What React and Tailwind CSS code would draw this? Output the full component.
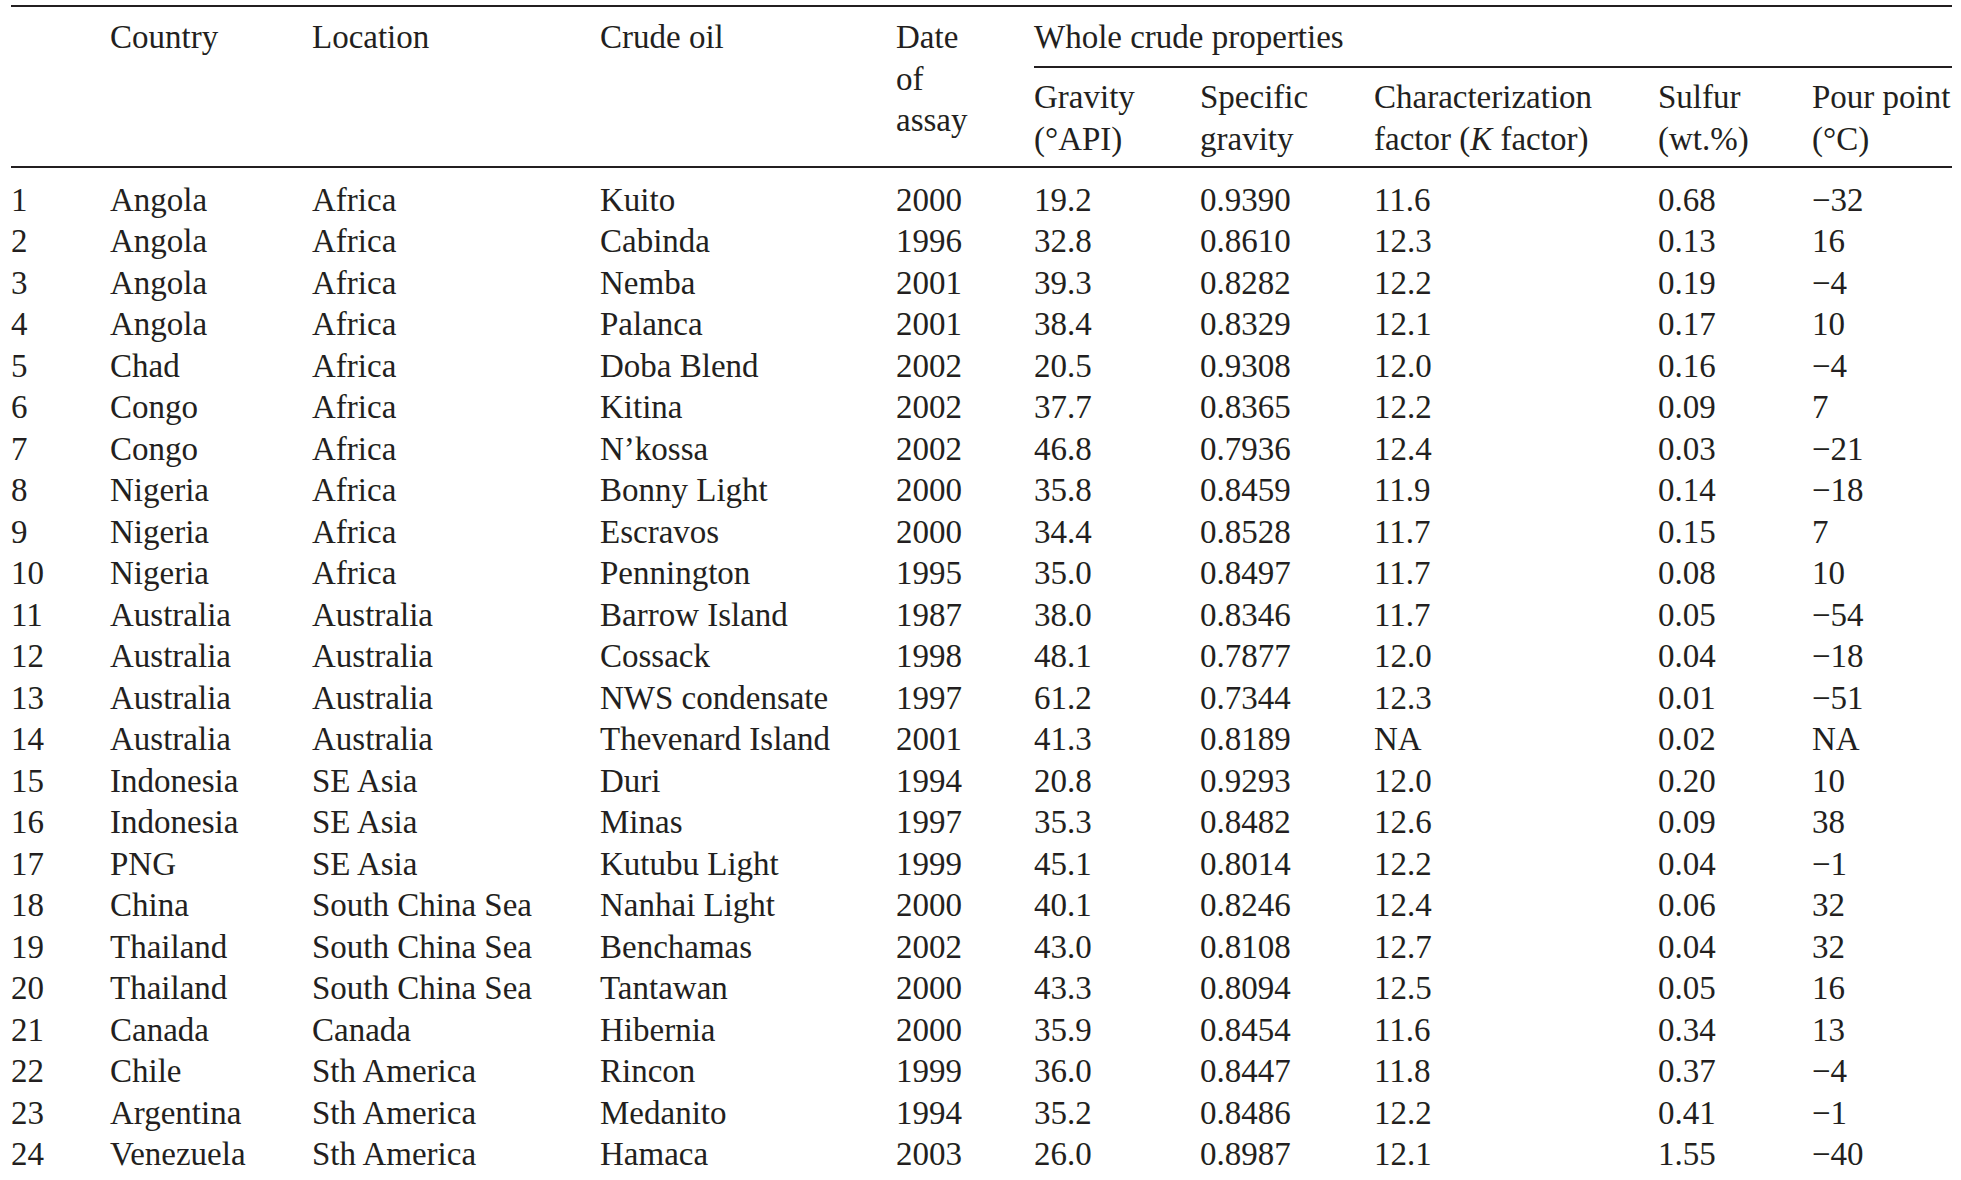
import React from "react";

const rows = [
  ["1", "Angola", "Africa", "Kuito", "2000", "19.2", "0.9390", "11.6", "0.68", "−32"],
  ["2", "Angola", "Africa", "Cabinda", "1996", "32.8", "0.8610", "12.3", "0.13", "16"],
  ["3", "Angola", "Africa", "Nemba", "2001", "39.3", "0.8282", "12.2", "0.19", "−4"],
  ["4", "Angola", "Africa", "Palanca", "2001", "38.4", "0.8329", "12.1", "0.17", "10"],
  ["5", "Chad", "Africa", "Doba Blend", "2002", "20.5", "0.9308", "12.0", "0.16", "−4"],
  ["6", "Congo", "Africa", "Kitina", "2002", "37.7", "0.8365", "12.2", "0.09", "7"],
  ["7", "Congo", "Africa", "N’kossa", "2002", "46.8", "0.7936", "12.4", "0.03", "−21"],
  ["8", "Nigeria", "Africa", "Bonny Light", "2000", "35.8", "0.8459", "11.9", "0.14", "−18"],
  ["9", "Nigeria", "Africa", "Escravos", "2000", "34.4", "0.8528", "11.7", "0.15", "7"],
  ["10", "Nigeria", "Africa", "Pennington", "1995", "35.0", "0.8497", "11.7", "0.08", "10"],
  ["11", "Australia", "Australia", "Barrow Island", "1987", "38.0", "0.8346", "11.7", "0.05", "−54"],
  ["12", "Australia", "Australia", "Cossack", "1998", "48.1", "0.7877", "12.0", "0.04", "−18"],
  ["13", "Australia", "Australia", "NWS condensate", "1997", "61.2", "0.7344", "12.3", "0.01", "−51"],
  ["14", "Australia", "Australia", "Thevenard Island", "2001", "41.3", "0.8189", "NA", "0.02", "NA"],
  ["15", "Indonesia", "SE Asia", "Duri", "1994", "20.8", "0.9293", "12.0", "0.20", "10"],
  ["16", "Indonesia", "SE Asia", "Minas", "1997", "35.3", "0.8482", "12.6", "0.09", "38"],
  ["17", "PNG", "SE Asia", "Kutubu Light", "1999", "45.1", "0.8014", "12.2", "0.04", "−1"],
  ["18", "China", "South China Sea", "Nanhai Light", "2000", "40.1", "0.8246", "12.4", "0.06", "32"],
  ["19", "Thailand", "South China Sea", "Benchamas", "2002", "43.0", "0.8108", "12.7", "0.04", "32"],
  ["20", "Thailand", "South China Sea", "Tantawan", "2000", "43.3", "0.8094", "12.5", "0.05", "16"],
  ["21", "Canada", "Canada", "Hibernia", "2000", "35.9", "0.8454", "11.6", "0.34", "13"],
  ["22", "Chile", "Sth America", "Rincon", "1999", "36.0", "0.8447", "11.8", "0.37", "−4"],
  ["23", "Argentina", "Sth America", "Medanito", "1994", "35.2", "0.8486", "12.2", "0.41", "−1"],
  ["24", "Venezuela", "Sth America", "Hamaca", "2003", "26.0", "0.8987", "12.1", "1.55", "−40"],
];

const widths = [
  "w-[99px]",
  "w-[202px]",
  "w-[288px]",
  "w-[296px]",
  "w-[138px]",
  "w-[166px]",
  "w-[174px]",
  "w-[284px]",
  "w-[154px]",
  "w-[140px]",
];

export default function App() {
  return (
    <div className="bg-white w-[1961px] h-[1180px] overflow-hidden pt-[5px] pl-[11px] font-['Liberation_Serif','Times_New_Roman',serif] text-[33px] leading-[41.5px] text-[#231f20]">
      <div className="w-[1941px] border-t-2 border-[#231f20]">
        {/* Header */}
        <div className="flex border-b-2 border-[#231f20]">
          <div className={`${widths[0]} shrink-0 pt-[10px]`}></div>
          <div className={`${widths[1]} shrink-0 pt-[10px]`}>Country</div>
          <div className={`${widths[2]} shrink-0 pt-[10px]`}>Location</div>
          <div className={`${widths[3]} shrink-0 pt-[10px]`}>Crude oil</div>
          <div className={`${widths[4]} shrink-0 pt-[10px]`}>
            <div>Date</div>
            <div>of</div>
            <div>assay</div>
          </div>
          <div className="flex-1 flex flex-col">
            <div className="pt-[10px] pb-[7px] border-b-2 border-[#231f20]">
              Whole crude properties
            </div>
            <div className="flex pt-[9.5px] pb-[6px]">
              <div className={`${widths[5]} shrink-0`}>
                <div>Gravity</div>
                <div>(°API)</div>
              </div>
              <div className={`${widths[6]} shrink-0`}>
                <div>Specific</div>
                <div>gravity</div>
              </div>
              <div className={`${widths[7]} shrink-0`}>
                <div>Characterization</div>
                <div>
                  factor (<i>K</i> factor)
                </div>
              </div>
              <div className={`${widths[8]} shrink-0`}>
                <div>Sulfur</div>
                <div>(wt.%)</div>
              </div>
              <div className={`${widths[9]} shrink-0 whitespace-nowrap`}>
                <div>Pour point</div>
                <div>(°C)</div>
              </div>
            </div>
          </div>
        </div>
        {/* Body */}
        <div className="pt-[11.5px]">
          {rows.map((r) => (
            <div key={r[0]} className="flex h-[41.5px]">
              {r.map((c, i) => (
                <div key={i} className={`${widths[i]} shrink-0 whitespace-nowrap`}>
                  {c}
                </div>
              ))}
            </div>
          ))}
        </div>
      </div>
    </div>
  );
}
